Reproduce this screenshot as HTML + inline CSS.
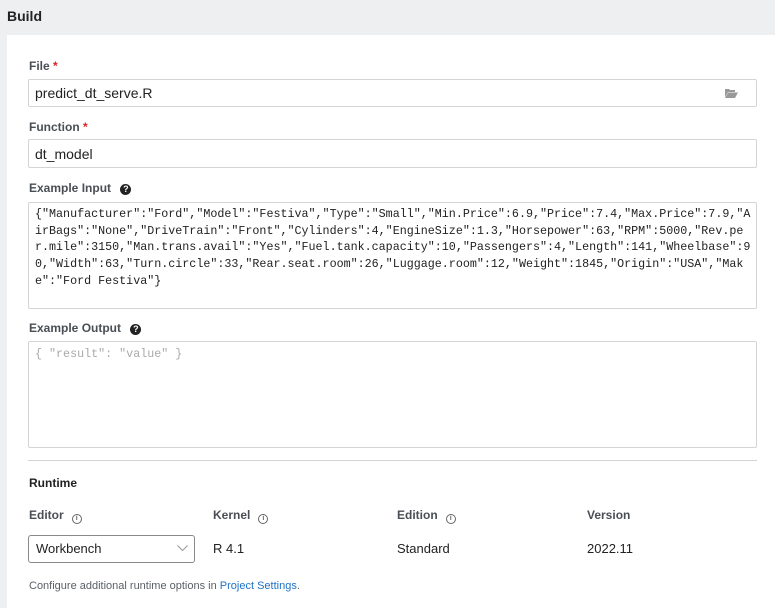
<!DOCTYPE html>
<html><head><style>
*{margin:0;padding:0;box-sizing:border-box}
body{width:775px;height:608px;background:#eeeff1;font-family:"Liberation Sans",sans-serif;position:relative;overflow:hidden;color:#333}
.a{position:absolute}
.panel{left:7px;top:35px;width:768px;height:573px;background:#fff}
.lbl{font-size:12px;font-weight:bold;color:#4a4f55}
.req{color:#d22}
.inp{border:1px solid #d4d4d4;border-radius:2px;background:#fff;left:28px;width:729px}
.txt{font-size:14px;color:#222}
.mono{font-family:"Liberation Mono",monospace;font-size:11.7px;line-height:16.7px;white-space:pre;color:#222}
.q{display:inline-block;width:11px;height:11px;border-radius:50%;background:#222;color:#fff;font-size:9px;text-align:center;line-height:11px;margin-left:6px;vertical-align:0px}
.i{display:inline-block;width:10px;height:10px;border-radius:50%;border:1px solid #666;color:#666;font-size:7px;text-align:center;line-height:8px;margin-left:8px;vertical-align:-1px;font-weight:bold}
</style></head><body>
<div class="a" style="left:7px;top:8px;font-size:14px;font-weight:bold;color:#222">Build</div>
<div class="a panel"></div>

<div class="a lbl" style="left:29px;top:59px">File <span class="req">*</span></div>
<div class="a inp" style="top:79px;height:28px"></div>
<div class="a txt" style="left:35px;top:85px">predict_dt_serve.R</div>
<svg class="a" style="left:725px;top:88px" width="13" height="10" viewBox="0 0 13 10"><path d="M0 1h4l1 1h5v2H3L0 9z" fill="#999"/><path d="M3 4.5h10L10 10H0z" fill="#999"/></svg>

<div class="a lbl" style="left:29px;top:120px">Function <span class="req">*</span></div>
<div class="a inp" style="top:139px;height:29px"></div>
<div class="a txt" style="left:35px;top:146px">dt_model</div>

<div class="a lbl" style="left:29px;top:181px">Example Input <span class="q">?</span></div>
<div class="a inp" style="top:202px;height:107px"></div>
<div class="a mono" style="left:35px;top:206px">{"Manufacturer":"Ford","Model":"Festiva","Type":"Small","Min.Price":6.9,"Price":7.4,"Max.Price":7.9,"A
irBags":"None","DriveTrain":"Front","Cylinders":4,"EngineSize":1.3,"Horsepower":63,"RPM":5000,"Rev.pe
r.mile":3150,"Man.trans.avail":"Yes","Fuel.tank.capacity":10,"Passengers":4,"Length":141,"Wheelbase":9
0,"Width":63,"Turn.circle":33,"Rear.seat.room":26,"Luggage.room":12,"Weight":1845,"Origin":"USA","Mak
e":"Ford Festiva"}</div>

<div class="a lbl" style="left:29px;top:321px">Example Output <span class="q">?</span></div>
<div class="a inp" style="top:341px;height:107px"></div>
<div class="a mono" style="left:35px;top:346px;color:#aaa">{ "result": "value" }</div>

<div class="a" style="left:28px;top:460px;width:729px;height:1px;background:#d4d4d4"></div>
<div class="a lbl" style="left:29px;top:476px;color:#222">Runtime</div>

<div class="a lbl" style="left:29px;top:508px">Editor<span class="i">i</span></div>
<div class="a lbl" style="left:213px;top:508px">Kernel<span class="i">i</span></div>
<div class="a lbl" style="left:397px;top:508px">Edition<span class="i">i</span></div>
<div class="a lbl" style="left:587px;top:508px">Version</div>

<div class="a" style="left:28px;top:535px;width:167px;height:28px;border:1px solid #888;border-radius:3px"></div>
<div class="a" style="left:36px;top:541px;font-size:13px;color:#222">Workbench</div>
<svg class="a" style="left:177px;top:545px" width="11" height="7" viewBox="0 0 11 7"><path d="M0.5 0.5L5.5 5.5L10.5 0.5" fill="none" stroke="#999" stroke-width="1"/></svg>
<div class="a" style="left:213px;top:541px;font-size:13px;color:#222">R 4.1</div>
<div class="a" style="left:397px;top:541px;font-size:13px;color:#222">Standard</div>
<div class="a" style="left:587px;top:541px;font-size:13px;color:#222">2022.11</div>

<div class="a" style="left:29px;top:580px;font-size:11px;color:#5a5f66">Configure additional runtime options in <span style="color:#1f73c9">Project Settings</span>.</div>
</body></html>
